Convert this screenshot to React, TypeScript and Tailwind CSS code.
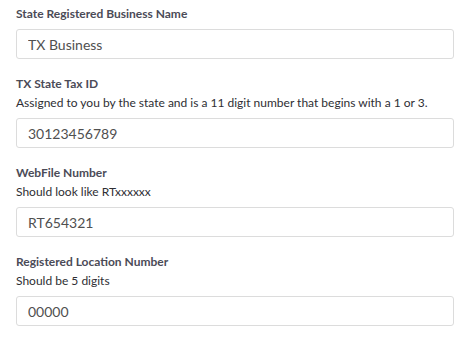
const FIELDS = [
  { label: "State Registered Business Name", value: "TX Business" },
  {
    label: "TX State Tax ID",
    help: "Assigned to you by the state and is a 11 digit number that begins with a 1 or 3.",
    value: "30123456789",
  },
  { label: "WebFile Number", help: "Should look like RTxxxxxx", value: "RT654321" },
  { label: "Registered Location Number", help: "Should be 5 digits", value: "00000" },
];

export default function App() {
  return (
    <div className="min-h-screen bg-white px-4 pt-[4px] font-['Lato',sans-serif]">
      {FIELDS.map((f) => (
        <div key={f.label} className="mb-[15px]">
          <div className="text-[12px] font-bold leading-[19px] text-[#4b4b57]">{f.label}</div>
          {f.help && <div className="text-[12px] leading-[19px] text-[#2e2e33]">{f.help}</div>}
          <input
            readOnly
            value={f.value}
            className="mt-[6px] block h-[30px] w-[438px] rounded-[3px] border border-[#dcdcdc] px-[11px] text-[14px] text-[#505050] outline-none"
          />
        </div>
      ))}
    </div>
  );
}
